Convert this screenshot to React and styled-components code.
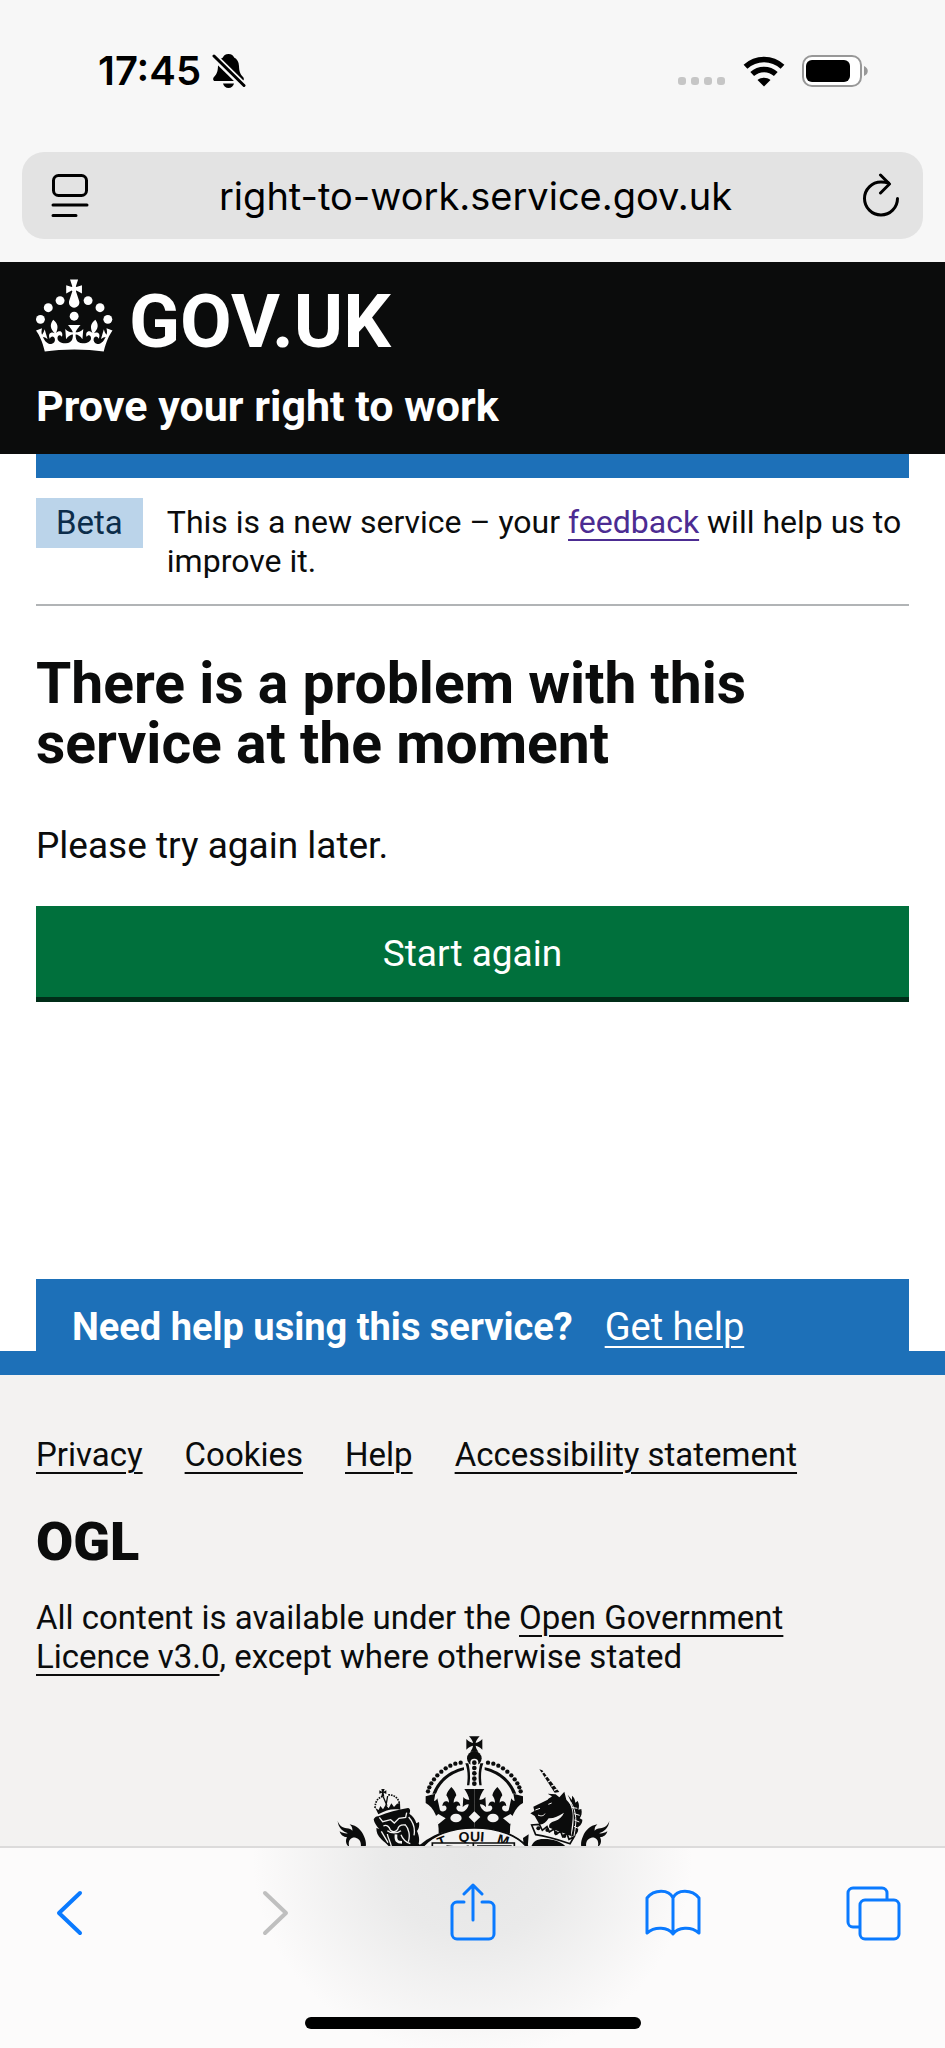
import React from "react";
import styled, { createGlobalStyle, ThemeProvider } from "styled-components";

const theme = {
  ink: "#0b0c0c",
  blue: "#1d70b8",
  green: "#00703c",
  grey: "#f3f2f1",
  tint: "#0a7aff",
  page: `Roboto, "Liberation Sans", sans-serif`,
  system: `Inter, "Liberation Sans", sans-serif`,
};

const GlobalStyle = createGlobalStyle`
  *, *::before, *::after {
    box-sizing: border-box;
  }

  body {
    margin: 0;
    background: #fff;
  }
`;

const Screen = styled.div`
  display: flex;
  flex-direction: column;
  height: 100vh;
  overflow: hidden;
  font-family: ${(props) => props.theme.page};
  color: ${(props) => props.theme.ink};
`;

// Browser chrome
const Chrome = styled.div`
  flex: none;
  padding: 40px 22px 23px;
  background: #f7f7f7;
  font-family: ${(props) => props.theme.system};
  color: #000;
`;

const StatusBar = styled.div`
  display: flex;
  align-items: center;
  justify-content: space-between;
  height: 62px;
  margin-bottom: 50px;
  padding: 0 55px 0 76px;
`;

const StatusGroup = styled.div`
  display: flex;
  align-items: center;
  gap: ${(props) => props.gap}px;
`;

const Clock = styled.span`
  font-size: 40px;
  font-weight: 600;
  line-height: 48px;
`;

const AddressBar = styled.div`
  display: flex;
  align-items: center;
  gap: 20px;
  height: 87px;
  padding: 0 12px 0 18px;
  border-radius: 22px;
  background: #e3e3e3;
`;

const IconButton = styled.button`
  display: flex;
  align-items: center;
  justify-content: center;
  flex: none;
  width: ${(props) => props.size}px;
  height: ${(props) => props.size}px;
  padding: 0;
  border: 0;
  background: none;
  color: inherit;

  &:disabled {
    color: #bfbfbf;
  }
`;

const Address = styled.input`
  flex: 1;
  min-width: 0;
  padding: 0;
  border: 0;
  outline: 0;
  background: none;
  color: inherit;
  font-family: inherit;
  font-size: 38px;
  line-height: 48px;
  text-align: center;
`;

// Service page
const Viewport = styled.div`
  display: flex;
  flex-direction: column;
  flex: 1;
  min-height: 0;
  overflow: hidden;
  background: #fff;
`;

const Header = styled.header`
  flex: none;
  padding: 16px 36px 24px;
  background: ${(props) => props.theme.ink};
  color: #fff;
`;

const Logo = styled.a`
  display: flex;
  align-items: flex-end;
  gap: 16px;
  height: 74px;
  color: inherit;
  font-size: 75px;
  font-weight: 700;
  line-height: 62px;
  text-decoration: none;
`;

const ServiceName = styled.a`
  display: block;
  margin-top: 30px;
  color: inherit;
  font-size: 43px;
  font-weight: 700;
  line-height: 48px;
  text-decoration: none;
`;

const Container = styled.div`
  flex: none;
  margin: 0 36px;
`;

const PhaseBanner = styled.div`
  display: flex;
  align-items: flex-start;
  gap: 24px;
  padding: 20px 0 23px;
  border-top: 24px solid ${(props) => props.theme.blue};
  border-bottom: 2px solid #b1b4b6;
`;

const Tag = styled.strong`
  flex: none;
  padding: 5px 20px;
  background: #bbd4ea;
  color: #0c2d4a;
  font-size: 33px;
  font-weight: 400;
  line-height: 40px;
`;

const PhaseText = styled.span`
  padding-top: 5px;
  font-size: 32px;
  line-height: 39px;
`;

const Link = styled.a`
  color: ${(props) => (props.$visited ? "#4c2c92" : "inherit")};
  text-decoration: underline;
  text-decoration-thickness: 2px;
  text-underline-offset: 6px;
`;

const Title = styled.h1`
  margin: 48px 0;
  font-size: 57px;
  font-weight: 700;
  line-height: 60px;
`;

const Body = styled.p`
  margin: 0 0 36px;
  font-size: 37px;
  line-height: 48px;
`;

const StartButton = styled.button`
  display: block;
  width: 100%;
  padding: 24px 24px 19px;
  border: 0;
  border-bottom: 5px solid #002d18;
  background: ${(props) => props.theme.green};
  color: #fff;
  font-family: inherit;
  font-size: 37px;
  line-height: 48px;
`;

const HelpPanel = styled.aside`
  display: flex;
  align-items: baseline;
  flex-wrap: wrap;
  gap: 32px;
  flex: none;
  margin: 277px 36px 0;
  padding: 24px 36px 0;
  background: ${(props) => props.theme.blue};
  color: #fff;
  font-size: 38px;
  line-height: 48px;
`;

const Footer = styled.footer`
  flex: none;
  padding: 60px 36px 0;
  border-top: 24px solid ${(props) => props.theme.blue};
  background: ${(props) => props.theme.grey};
  font-size: 33px;
  line-height: 39px;
`;

const FooterLinks = styled.nav`
  display: flex;
  flex-wrap: wrap;
  gap: 16px 42px;
`;

const Ogl = styled.strong`
  display: block;
  margin: 48px 0 36px;
  font-size: 54px;
  font-weight: 900;
  line-height: 40px;
`;

const Licence = styled.p`
  margin: 0 0 60px;
  padding-right: 60px;
`;

const Crest = styled.a`
  display: flex;
  justify-content: center;
  color: inherit;
`;

const Toolbar = styled.div`
  display: flex;
  flex-direction: column;
  align-items: center;
  justify-content: space-between;
  flex: none;
  height: 202px;
  padding: 35px 42px 19px;
  border-top: 2px solid #dcdbdb;
  background: radial-gradient(
      ellipse 220px 200px at 50% 5%,
      #e6e6e6 0%,
      #eaeaea 40%,
      rgba(252, 251, 251, 0) 100%
    )
    #fcfbfb;
`;

const ToolbarButtons = styled.div`
  display: flex;
  justify-content: space-between;
  width: 100%;
  color: ${(props) => props.theme.tint};
`;

const HomeIndicator = styled.div`
  width: 336px;
  height: 12px;
  border-radius: 6px;
  background: #000;
`;

const BellSlash = () => (
  <svg width="34" height="36" viewBox="0 0 34 36" aria-hidden="true">
    <path
      d="M16.500 1c-3 0-5 1.600-5.600 3.600C8 6 6.200 9 6 13c-.2 5-1 8-4 11-1.400 1.500-1 4 1 4h27c2 0 2.400-2.500 1-4-3-3-3.800-6-4-11-.2-4-2-7-4.900-8.400C21.500 2.600 19.500 1 16.500 1z"
      fill="#000"
    />
    <path d="M11 30.500h11c-.6 2.600-2.800 4.500-5.500 4.500s-4.900-1.900-5.500-4.500z" fill="#000" />
    <path d="M1 2.500l31 30.500" stroke="#f7f7f7" strokeWidth="7" />
    <path d="M2 3l30 29.500" stroke="#000" strokeWidth="3" strokeLinecap="round" />
  </svg>
);

const SignalDots = () => (
  <svg width="48" height="32" viewBox="0 0 48 32" fill="#c6c6c6" aria-hidden="true">
    {[0, 13, 26, 39].map((x) => (
      <rect key={x} x={x} y="22" width="8" height="8" rx="3" />
    ))}
  </svg>
);

const Wifi = () => (
  <svg width="42" height="31" viewBox="0 0 42 31" aria-hidden="true">
    <path d="M21 30.500l-6.500-6.400c3.600-3.200 9.400-3.200 13 0z" fill="#000" />
    <g fill="none" stroke="#000" strokeWidth="5.600">
      <path d="M2.500 10.800c10.500-9.700 26.500-9.700 37 0" />
      <path d="M9.200 18c6.700-6 16.900-6 23.600 0" />
    </g>
  </svg>
);

const Battery = () => (
  <svg width="66" height="32" viewBox="0 0 66 32" aria-hidden="true">
    <rect x="1" y="1" width="58" height="30" rx="9" fill="#fff" stroke="#989898" strokeWidth="2" />
    <rect x="4" y="5" width="44" height="22" rx="6" fill="#000" />
    <path d="M62 11c5 2 5 8 0 10z" fill="#989898" />
  </svg>
);

const PageMenu = () => (
  <svg
    width="38"
    height="46"
    viewBox="0 0 38 46"
    fill="none"
    stroke="currentColor"
    strokeWidth="3"
    strokeLinecap="round"
    aria-hidden="true"
  >
    <rect x="2.500" y="2.500" width="33" height="20" rx="5" />
    <path d="M2 32h34M2 42.500h23" />
  </svg>
);

const Reload = () => (
  <svg
    width="38"
    height="46"
    viewBox="0 0 38 46"
    fill="none"
    stroke="currentColor"
    strokeWidth="3"
    strokeLinecap="round"
    strokeLinejoin="round"
    aria-hidden="true"
  >
    <path d="M35.500 25.500A16.500 16.500 0 1 1 19 9c3 0 5.500.3 7.500 1" />
    <path d="M18.500 2l9 9-9 9" />
  </svg>
);

const Stroke = ({ children }) => (
  <svg
    width="60"
    height="60"
    viewBox="0 0 60 60"
    fill="none"
    stroke="currentColor"
    strokeWidth="4"
    strokeLinecap="round"
    strokeLinejoin="round"
    aria-hidden="true"
  >
    {children}
  </svg>
);

const Crown = () => (
  <svg width="77" height="73" viewBox="0 0 64 60" fill="currentColor" aria-hidden="true">
    <circle cx="20" cy="17.600" r="3.700" />
    <circle cx="10.200" cy="23.500" r="3.700" />
    <circle cx="3.700" cy="33.200" r="3.700" />
    <circle cx="31.700" cy="30.600" r="3.700" />
    <circle cx="43.300" cy="17.600" r="3.700" />
    <circle cx="53.200" cy="23.500" r="3.700" />
    <circle cx="59.700" cy="33.200" r="3.700" />
    <path d="M33.1,9.8c.2-.1.3-.3.5-.5l4.6,2.4v-6.8l-4.600,1.500c-.1-.2-.3-.3-.5-.5l1.900-5.900h-6.700l1.900,5.900c-.2.1-.3.3-.5.5l-4.600-1.500v6.800l4.600-2.400c.1.2.3.3.5.5l-2.600,8c-.9,2.800,1.200,5.700,4.100,5.700h0c3,0,5.100-2.900,4.100-5.700l-2.600-8ZM37,37.900s-3.400,3.800-4.100,6.100c2.200,0,4.200-.5,6.400-2.800l-.7,8.500c-2-2.800-4.400-4.100-5.700-3.800.1,3.100.5,6.700,5.800,7.200,3.700.3,6.700-1.500,7-3.800.4-2.600-2-4.300-3.700-1.600-1.400-4.500,2.400-6.100,4.900-3.200-1.900-4.500-1.800-7.700,2.400-10.900,3,4,2.600,7.300-1.200,11.100,2.400-1.300,6.200,0,4,4.600-1.200-2.800-3.700-2.200-4.200.2-.3,1.700.7,3.700,3,4.200,1.900.3,4.700-.9,7-5.900-1.300,0-2.400.7-3.900,1.700l2.400-8c.6,2.300,1.400,3.700,2.200,4.500.6-1.600.5-2.800,0-5.300l5,1.800c-2.600,3.600-5.200,8.700-7.300,17.500-7.400-1.100-15.700-1.700-24.500-1.700h0c-8.800,0-17.100.6-24.500,1.700-2.100-8.900-4.700-13.900-7.300-17.500l5-1.800c-.5,2.500-.6,3.700,0,5.300.8-.8,1.600-2.300,2.200-4.500l2.400,8c-1.500-1-2.600-1.700-3.900-1.700,2.300,5,5.200,6.200,7,5.900,2.300-.4,3.300-2.400,3-4.200-.5-2.400-3-3.100-4.200-.2-2.200-4.600,1.600-6,4-4.600-3.700-3.700-4.200-7.100-1.200-11.100,4.200,3.200,4.300,6.400,2.400,10.900,2.500-2.800,6.300-1.300,4.900,3.200-1.800-2.700-4.100-1-3.700,1.600.3,2.300,3.300,4.100,7,3.800,5.400-.5,5.700-4.200,5.800-7.200-1.300-.2-3.700,1-5.700,3.800l-.7-8.500c2.200,2.300,4.200,2.700,6.400,2.800-.7-2.300-4.100-6.100-4.100-6.100h10.600,0Z" />
  </svg>
);

// One side of the crown; the other is this one mirrored
const pearls = [
  [424, 155], [408, 158], [393, 164], [379, 172], [366, 182],
  [354, 193], [344, 205], [336, 217], [330, 229], [326, 241],
];

const CrownHalf = () => (
  <g>
    {pearls.map(([cx, cy]) => (
      <circle key={cx} cx={cx} cy={cy} r="6.500" />
    ))}
    <path d="M434 169C391 178 356 205 339 248l11 0C364 211 394 188 434 177z" />
    <path d="M438 157c8 20 8 42 5 66l7 0c4-25 2-48-3-66z" />
    <path d="M319 256l29-8-4 22c5 0 8-4 10-8l8 36c6 6 16 4 19-3 3-8-4-15-12-10 1-14 12-19 20-10 0-10-3-14-8-22 2-10 8-17 15-25 8 8 13 15 15 25-5 8-8 12-8 22 8-8 20-3 20 10-8-5-14 2-11 10 4 9 19 10 26 3 7-6 10-14 10-18-7-1-15 4-18 9l2-31c5 6 10 9 18 8-2-10-8-22-15-32h30v120c-43 0-76 4-107 14 2-42-14-80-39-92z" />
  </g>
);

const Tail = () => (
  <path d="M55 330c5 14 14 20 27 22 8 1 14 3 17 7 1-9-3-14-8-19 22 4 36 18 43 36 6 14 8 26 3 38h-14c5-18-1-31-14-34-14-3-25 9-19 28-10-6-13-19-7-29-11-1-20-8-22-18 8 5 17 7 25 6-15-5-29-16-31-37z" />
);

const RoyalArms = () => (
  <svg
    width="274"
    height="160"
    viewBox="50 75 822 480"
    fill="currentColor"
    role="img"
    aria-label="Royal coat of arms"
  >
    <path d="M449 76h32c-7 8-11 13-12 20 7-1 12-4 20-12v32c-8-8-13-11-20-12 1 6 3 11 8 18h-24c5-7 7-12 8-18-7 1-12 4-20 12V84c8 8 13 11 20 12-1-7-5-12-12-20z" />
    <circle cx="465" cy="142" r="22" />
    <circle cx="465" cy="155" r="12" fill="#f3f2f1" />
    {[155, 171, 187, 203, 218].map((y) => (
      <circle key={y} cx="465" cy={y} r="7" />
    ))}
    <CrownHalf />
    <g transform="translate(930 0) scale(-1 1)">
      <CrownHalf />
    </g>
    <g fill="#f3f2f1">
      <ellipse cx="410" cy="321" rx="17" ry="13" />
      <ellipse cx="521" cy="321" rx="17" ry="13" />
      <path d="M448 318l17-17 18 17-18 17zM346 318l11-9 22 13-22 18zM584 318l-11-9-22 13 22 18z" />
    </g>
    <Tail />
    <g transform="translate(925 0) scale(-1 1)">
      <Tail />
    </g>

    {/* lion */}
    <g>
      <path d="M186 234h10l-3 8 8-4v11l-8-4 2 12h-9l2-12-8 3v-10l8 4z" />
      <path
        d="M167 291c1-20 8-31 24-35M240 276c-5-18-18-26-35-24"
        fill="none"
        stroke="currentColor"
        strokeWidth="5"
        strokeDasharray="5 3"
      />
      <path d="M192 258l11 26M205 255l-5 28" fill="none" stroke="currentColor" strokeWidth="4" />
      <path d="M168 291l10 6 5-12 8 10 8-14 9 11 8-15 8 11 9-10 9-2 1 20c-23-4-44 1-66 14z" />
      <path d="M163 325c4-6 8-10 14-9 28-13 58-20 89-25 7 1 8 10 4 17 11 7 18 17 21 29l8-4c2 12-1 20-6 27 6 13 8 25 5 38 3 5 6 3 18-1v16H212c-4-12-17-18-26-28-11-11-15-21-15-34l9 3c-9-9-15-18-17-29z" />
      <g fill="none" stroke="#f3f2f1" strokeWidth="4">
        <path d="M180 319l10 13 24-6 11 10 14-14 20-3 3-14M192 345c10-5 18 2 21 12 6 7 17 6 22-2 2-10 11-14 22-13M204 359c10 9 30 9 41 0M268 318c13 15 20 35 16 55M257 340c12 13 16 34 10 52M245 371c5 13 13 22 28 27M204 369c3 17 12 26 13 44M186 361l20 34" />
        <path d="M230 370c-2 20 4 24 18 24" strokeWidth="8" />
      </g>
    </g>

    {/* unicorn */}
    <g>
      <path d="M660 175l9 3 51 65-14 2z" />
      <path
        d="M665 188l12-7M676 200l11-7M686 213l12-7M696 226l13-7M704 238l15-7"
        stroke="#f3f2f1"
        strokeWidth="4"
      />
      <path d="M720 259l15-17 6 24c18 16 22 43 18 67-2 20-4 30-4 42l-65-25c-3-10 4-17 17-20 13-5 22-13 27-25-17 10-31 18-46 17-8 13-18 20-28 18l-14-25-13-8 12-7-3-13 43-21c2-4 9-6 13-10l-13-8 24 2z" />
      <path d="M745 251l13 16 0-13c7 5 9 12 10 21l7-5c5 9 5 18 2 26l9-2c3 12 0 22-5 28l8 4c0 12-7 19-14 22 4 8 1 17-7 25l-13 4c8-25 17-76-10-126z" />
      <g fill="none" stroke="#f3f2f1" strokeWidth="3">
        <path d="M648 297l14-5M656 312c9 5 18 2 21-4M687 280l10-4M754 272c19 33 18 61 10 102M757 289l17 3M764 308l17 5M765 327l15 6M764 346l13 6" />
      </g>
      <path d="M637 342l12 29c36 5 73 17 103 27l12-20-15 7-6-17-13 9-6-16-14 9-6-16-14 9-7-16-14 11-9-18z" fill="#f3f2f1" stroke="currentColor" strokeWidth="5" />
      <circle cx="657" cy="352" r="6" />
      <circle cx="684" cy="357" r="6" />
      <circle cx="710" cy="366" r="6" />
      <circle cx="735" cy="375" r="6" />
      <path d="M634 413c4-19 17-30 41-29 31 0 54 9 70 29zM611 381l17-11-3 43h-11z" />
    </g>

    {/* garter and the top of the shield */}
    <path d="M289 413c32-31 69-49 103-56h148c34 7 65 26 96 56z" />
    <path
      d="M306 413c30-39 88-62 159-62s131 23 161 62z"
      fill="#f3f2f1"
      stroke="currentColor"
      strokeWidth="4"
    />
    <path id="garter" d="M330 430C380 378 550 378 600 430" fill="none" />
    <text
      fontFamily="Liberation Sans, sans-serif"
      fontSize="42"
      fontWeight="700"
      textAnchor="middle"
    >
      <textPath href="#garter" startOffset="17%">T</textPath>
      <textPath href="#garter" startOffset="47%">QUI</textPath>
      <textPath href="#garter" startOffset="79%">M</textPath>
    </text>
    <path d="M339 396h246v100H339zM462 396v100" fill="#f3f2f1" stroke="currentColor" strokeWidth="5" />
    <path d="M347 407h24l4 6h12l-3-8 18 2 22 4 24-6M473 405h102v10M473 405v10M497 412h22" fill="none" stroke="currentColor" strokeWidth="4" />
  </svg>
);

const footerLinks = ["Privacy", "Cookies", "Help", "Accessibility statement"];

const App = () => {
  return (
    <ThemeProvider theme={theme}>
      <GlobalStyle />
      <Screen>
        <Chrome>
          <StatusBar>
            <StatusGroup gap={11}>
              <Clock>17:45</Clock>
              <BellSlash />
            </StatusGroup>
            <StatusGroup gap={17}>
              <SignalDots />
              <Wifi />
              <Battery />
            </StatusGroup>
          </StatusBar>
          <AddressBar>
            <IconButton size={60} aria-label="Page menu">
              <PageMenu />
            </IconButton>
            <Address aria-label="Address" defaultValue="right-to-work.service.gov.uk" />
            <IconButton size={60} aria-label="Reload">
              <Reload />
            </IconButton>
          </AddressBar>
        </Chrome>

        <Viewport>
          <Header>
            <Logo href="#">
              <Crown />
              GOV.UK
            </Logo>
            <ServiceName href="#">Prove your right to work</ServiceName>
          </Header>

          <Container>
            <PhaseBanner>
              <Tag>Beta</Tag>
              <PhaseText>
                This is a new service – your{" "}
                <Link href="#" $visited>
                  feedback
                </Link>{" "}
                will help us to improve it.
              </PhaseText>
            </PhaseBanner>
            <main>
              <Title>There is a problem with this service at the moment</Title>
              <Body>Please try again later.</Body>
              <StartButton type="button">Start again</StartButton>
            </main>
          </Container>

          <HelpPanel>
            <strong>Need help using this service?</strong>
            <Link href="#">Get help</Link>
          </HelpPanel>

          <Footer>
            <FooterLinks>
              {footerLinks.map((name) => (
                <Link key={name} href="#">
                  {name}
                </Link>
              ))}
            </FooterLinks>
            <Ogl>OGL</Ogl>
            <Licence>
              All content is available under the{" "}
              <Link href="#">Open Government Licence v3.0</Link>, except where otherwise stated
            </Licence>
            <Crest href="#">
              <RoyalArms />
            </Crest>
          </Footer>
        </Viewport>

        <Toolbar>
          <ToolbarButtons>
            <IconButton size={60} aria-label="Back">
              <Stroke>
                <path d="M38 10L17 30l21 20" />
              </Stroke>
            </IconButton>
            <IconButton size={60} aria-label="Forward" disabled>
              <Stroke>
                <path d="M23 10l21 20-21 20" />
              </Stroke>
            </IconButton>
            <IconButton size={60} aria-label="Share">
              <Stroke>
                <path d="M21 19h-7a5 5 0 0 0-5 5v27a5 5 0 0 0 5 5h32a5 5 0 0 0 5-5V24a5 5 0 0 0-5-5h-7M30 37V2M21 11l9-9 9 9" strokeWidth="3" />
              </Stroke>
            </IconButton>
            <IconButton size={60} aria-label="Bookmarks">
              <Stroke>
                <path d="M30 51C25 44 12 43 4 50V15C11 6 26 6 30 15v36c5-7 18-8 26-1V15C49 6 34 6 30 15" strokeWidth="3" />
              </Stroke>
            </IconButton>
            <IconButton size={60} aria-label="Tabs">
              <Stroke>
                <path d="M16 44h-6a5 5 0 0 1-5-5V10a5 5 0 0 1 5-5h29a5 5 0 0 1 5 5v6" strokeWidth="3" />
                <rect x="17" y="17" width="39" height="39" rx="5" strokeWidth="3" />
              </Stroke>
            </IconButton>
          </ToolbarButtons>
          <HomeIndicator />
        </Toolbar>
      </Screen>
    </ThemeProvider>
  );
};

export default App;
